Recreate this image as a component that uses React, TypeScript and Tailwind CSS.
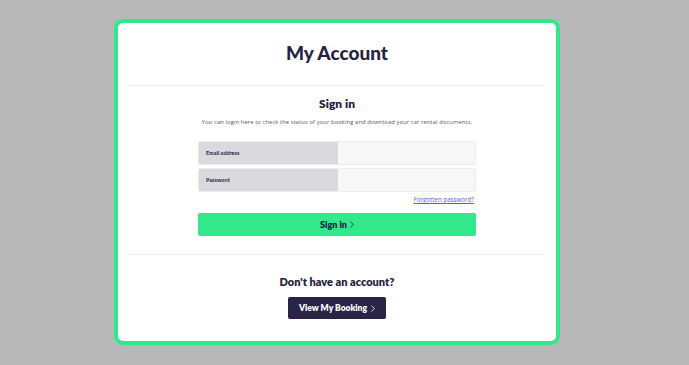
import React from "react";

const Chevron = ({ className = "" }: { className?: string }) => (
  <svg viewBox="0 0 6 10" className={className} fill="none" stroke="currentColor" strokeWidth="1.2" strokeLinecap="round" strokeLinejoin="round">
    <path d="M1 1l4 4-4 4" />
  </svg>
);

export default function App() {
  return (
    <div className="w-[689px] h-[365px] bg-[#b8b8b8] pt-[19px] overflow-hidden" style={{ fontFamily: "Lato, 'Noto Sans', sans-serif" }}>
      <div className="ml-[114px] w-[446px] h-[326px] border-[4px] border-[#31e98a] rounded-[9px] bg-white px-[11px] flex flex-col">
        <h1 className="text-[#262340] font-black text-[19px] leading-[24px] text-center pt-[18px] pb-[20px] border-b border-[#e8e8ea]">
          My Account
        </h1>
        <div className="flex flex-col items-center border-b border-[#eeeef0] pb-[18px]">
          <h2 className="mt-[10px] text-[#262340] font-extrabold text-[12px] leading-[16px]">Sign in</h2>
          <p className="mt-[6px] text-[#555] text-[5.8px] leading-[8px] tracking-[0.1px]" style={{ fontFamily: "'Open Sans', sans-serif" }}>
            You can login here to check the status of your booking and download your car rental documents.
          </p>
          <div className="mt-[15px] w-[278px] flex flex-col">
            <div className="flex h-[24px] border border-[#ececee] rounded-[2px] overflow-hidden">
              <div className="w-[139px] bg-[#dcd9de] flex items-center pl-[7px] text-[5.5px] font-bold text-[#262340]">Email address</div>
              <div className="flex-1 bg-[#f8f8f8]" />
            </div>
            <div className="mt-[3px] flex h-[24px] border border-[#ececee] rounded-[2px] overflow-hidden">
              <div className="w-[139px] bg-[#dcd9de] flex items-center pl-[7px] text-[5.5px] font-bold text-[#262340]">Password</div>
              <div className="flex-1 bg-[#f8f8f8]" />
            </div>
            <div className="flex justify-end pr-[2px] mt-[4px]">
              <a className="text-[6.2px] leading-[8px] text-[#5b5be6] underline" style={{ fontFamily: "'Open Sans', sans-serif" }}>Forgotten password?</a>
            </div>
            <button className="mt-[9px] h-[23px] bg-[#31e98a] rounded-[2px] flex items-center justify-center gap-[3px] text-[#262340] font-extrabold text-[9px]">
              Sign in <Chevron className="w-[4px] h-[7px]" />
            </button>
          </div>
        </div>
        <div className="flex flex-col items-center">
          <h3 className="mt-[20px] text-[#262340] font-extrabold text-[11px] leading-[14px]">Don't have an account?</h3>
          <button className="mt-[8px] w-[98px] h-[22px] bg-[#2a2545] rounded-[2px] flex items-center justify-center gap-[4px] text-white font-extrabold text-[8.5px]">
            View My Booking <Chevron className="w-[4px] h-[7px]" />
          </button>
        </div>
      </div>
    </div>
  );
}
